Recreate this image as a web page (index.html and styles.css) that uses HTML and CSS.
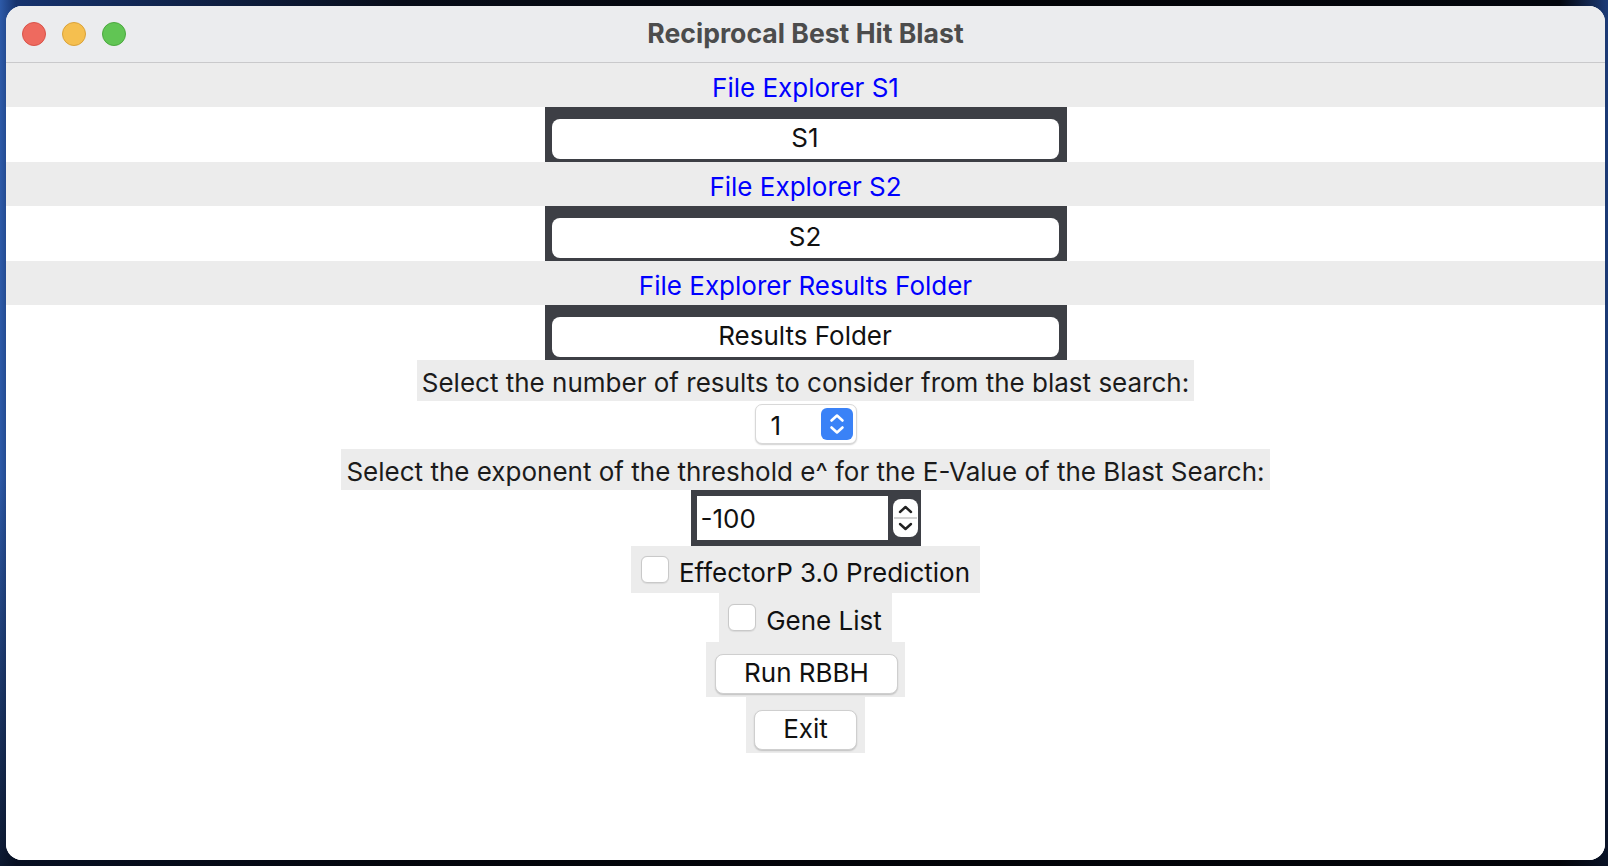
FILE: index.html
```html
<!DOCTYPE html>
<html lang="en">
<head>
<meta charset="utf-8">
<title>Reciprocal Best Hit Blast</title>
<link rel="stylesheet" href="styles.css">
</head>
<body>
<div class="desktop">
  <div class="window">
    <div class="titlebar">
      <div class="lights">
        <span class="light red"></span>
        <span class="light yellow"></span>
        <span class="light green"></span>
      </div>
      <div class="title">Reciprocal Best Hit Blast</div>
      <div class="spacer"></div>
    </div>
    <div class="content">
      <div class="band">File Explorer S1</div>
      <div class="entry-row"><div class="entry-frame"><div class="entry-field">S1</div></div></div>
      <div class="band">File Explorer S2</div>
      <div class="entry-row"><div class="entry-frame"><div class="entry-field">S2</div></div></div>
      <div class="band">File Explorer Results Folder</div>
      <div class="entry-row"><div class="entry-frame"><div class="entry-field">Results Folder</div></div></div>

      <div class="prompt">Select the number of results to consider from the blast search:</div>
      <div class="combo">
        <span class="combo-value">1</span>
        <span class="stepper">
          <svg width="32" height="32" viewBox="0 0 32 32">
            <path d="M10.5 12.5 L16 7.5 L21.5 12.5" fill="none" stroke="#fff" stroke-width="2.6" stroke-linecap="round" stroke-linejoin="round"/>
            <path d="M10.5 19.5 L16 24.5 L21.5 19.5" fill="none" stroke="#fff" stroke-width="2.6" stroke-linecap="round" stroke-linejoin="round"/>
          </svg>
        </span>
      </div>

      <div class="prompt">Select the exponent of the threshold e^ for the E-Value of the Blast Search:</div>
      <div class="spin-frame">
        <div class="spin-field">-100</div>
        <div class="spin-arrows">
          <svg width="25" height="38" viewBox="0 0 25 38">
            <path d="M7 13 L12.5 8 L18 13" fill="none" stroke="#222" stroke-width="2.4" stroke-linecap="round" stroke-linejoin="round"/>
            <line x1="1" y1="19" x2="24" y2="19" stroke="#c4c4c4" stroke-width="1.5"/>
            <path d="M7 25 L12.5 30 L18 25" fill="none" stroke="#222" stroke-width="2.4" stroke-linecap="round" stroke-linejoin="round"/>
          </svg>
        </div>
      </div>

      <div class="check-row wide"><span class="check"></span><span class="check-label">EffectorP 3.0 Prediction</span></div>
      <div class="check-row narrow"><span class="check"></span><span class="check-label">Gene List</span></div>

      <div class="btn-wrap run"><button class="btn">Run RBBH</button></div>
      <div class="btn-wrap exit"><button class="btn">Exit</button></div>
    </div>
  </div>
</div>
</body>
</html>
```

FILE: styles.css
```css
* { box-sizing: border-box; }

html, body {
  margin: 0;
  padding: 0;
  width: 1608px;
  height: 866px;
  overflow: hidden;
}

body {
  background: #03050b;
  font-family: "Inter", "Liberation Sans", sans-serif;
}

.desktop {
  width: 1608px;
  height: 866px;
  padding: 6px 3px 6px 6px;
  background:
    linear-gradient(to bottom, rgba(2,3,8,0) 0%, rgba(2,3,8,0) 55%, rgba(2,3,8,0.75) 100%),
    linear-gradient(to right, #2d5aa8 0%, #16336e 1%, #070c18 25%, #020306 60%, #03060d 97%, #1c3b78 100%);
}

.window {
  width: 1599px;
  height: 854px;
  background: #ffffff;
  border-radius: 16px;
  overflow: hidden;
  display: flex;
  flex-direction: column;
}

.titlebar {
  height: 57px;
  flex: none;
  background: #ebecee;
  border-bottom: 1px solid #c9c9cb;
  display: grid;
  grid-template-columns: 1fr auto 1fr;
  align-items: center;
}

.lights {
  display: flex;
  gap: 16px;
  padding-left: 16px;
}

.light {
  width: 24px;
  height: 24px;
  border-radius: 50%;
  display: block;
}
.light.red { background: #ee6a5f; border: 1px solid #d85349; }
.light.yellow { background: #f5bf4f; border: 1px solid #d9a23a; }
.light.green { background: #61c554; border: 1px solid #4ca83f; }

.title {
  font-weight: 700;
  font-size: 26.6px;
  color: #4c4c4c;
  padding-bottom: 3px;
}

.content {
  flex: 1;
  display: flex;
  flex-direction: column;
  align-items: center;
  background: #ffffff;
}

.band {
  align-self: stretch;
  height: 44px;
  background: #ececec;
  color: #0000ff;
  font-size: 26px;
  display: flex;
  align-items: center;
  justify-content: center;
  padding-top: 5px;
}

.entry-row {
  align-self: stretch;
  height: 55px;
  display: flex;
  justify-content: center;
}

.entry-frame {
  width: 522px;
  height: 55px;
  background: #3d3f45;
  padding: 12px 8px 3px 7px;
}

.entry-field {
  height: 40px;
  background: #ffffff;
  border-radius: 8px;
  display: flex;
  align-items: center;
  justify-content: center;
  font-size: 26px;
  color: #111;
  padding-bottom: 4px;
}

.prompt {
  height: 41px;
  background: #ececec;
  padding: 3px 5px 0;
  display: flex;
  align-items: center;
  font-size: 26px;
  color: #1b1b1b;
}

.combo {
  width: 102px;
  height: 40px;
  margin: 3px 0 5px;
  background: #ffffff;
  border: 1px solid #d8d8d8;
  border-radius: 7px;
  box-shadow: 0 1px 1.5px rgba(0,0,0,0.18);
  display: flex;
  align-items: center;
  justify-content: space-between;
  padding: 0 3px 0 15px;
  font-size: 26px;
  color: #111;
}

.combo-value { padding-top: 3px; }

.stepper {
  width: 32px;
  height: 32px;
  background: #3a82f7;
  border-radius: 6px;
  display: flex;
}

.spin-frame {
  width: 230px;
  height: 56px;
  background: #3d3f45;
  display: flex;
  align-items: center;
  padding: 0 3px 0 6px;
  gap: 5px;
}

.spin-field {
  width: 191px;
  height: 44px;
  background: #ffffff;
  display: flex;
  align-items: center;
  padding-left: 4px;
  font-size: 26px;
  color: #111;
}

.spin-arrows {
  width: 25px;
  height: 38px;
  background: #ffffff;
  border-radius: 8px;
  display: flex;
}

.check-row {
  background: #ececec;
  display: flex;
  align-items: center;
  font-size: 26px;
  color: #111;
}
.check-row.wide { height: 47px; padding: 0 10px; gap: 10px; }
.check-row.narrow { height: 49px; padding: 0 10px 0 9px; gap: 10px; }

.check-label { padding-top: 5px; }

.check {
  width: 28px;
  height: 27px;
  background: #ffffff;
  border: 1px solid #c9c9c9;
  border-radius: 6px;
  box-shadow: 0 0.5px 1px rgba(0,0,0,0.08);
  display: block;
}

.btn-wrap {
  background: #ececec;
  display: flex;
  align-items: flex-start;
}
.btn-wrap.run { height: 55px; padding: 12px 7px 3px 9px; }
.btn-wrap.exit { height: 56px; padding: 13px 8px 3px 8px; }

.btn {
  height: 40px;
  background: #ffffff;
  border: 1px solid #cfcfcf;
  border-radius: 8px;
  box-shadow: 0 1px 1.5px rgba(0,0,0,0.18);
  font-family: "Inter", "Liberation Sans", sans-serif;
  font-size: 26px;
  color: #111;
  padding: 0 28px 2px;
  line-height: 1;
}
```
